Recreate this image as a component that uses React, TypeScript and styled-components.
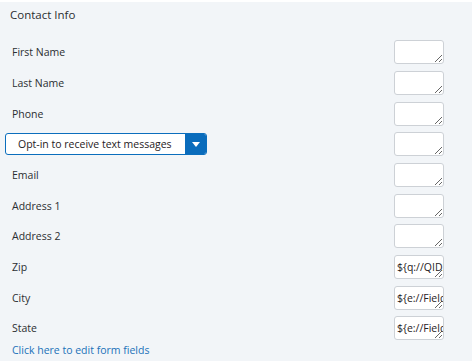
import styled, { createGlobalStyle } from 'styled-components';

const Global = createGlobalStyle`
    html, body {
        margin: 0;
        background: #ffffff;
    }
    body {
        font-family: "Open Sans", Lato, sans-serif;
        color: #2b2e31;
    }
`

const fields = [
    { label: 'First Name' },
    { label: 'Last Name' },
    { label: 'Phone' },
    { label: 'Opt-in to receive text messages', select: true },
    { label: 'Email' },
    { label: 'Address 1' },
    { label: 'Address 2' },
    { label: 'Zip', value: '${q://QID2/ChoiceTextEntryValue}' },
    { label: 'City', value: '${e://Field/City}' },
    { label: 'State', value: '${e://Field/State}' },
]

export default function App() {
    return (
        <>
            <Global />
            <Panel>
                <Heading>Contact Info</Heading>
                <Rows>
                    {fields.map((f) => (
                        <Row key={f.label}>
                            {f.select ? (
                                <Select>
                                    <SelectText>{f.label}</SelectText>
                                    <Caret>
                                        <svg width="8" height="5" viewBox="0 0 8 5">
                                            <path d="M0 0h8L4 5z" fill="#fff" />
                                        </svg>
                                    </Caret>
                                </Select>
                            ) : (
                                <Label>{f.label}</Label>
                            )}
                            <Field defaultValue={f.value ?? ''} spellCheck={false} />
                        </Row>
                    ))}
                </Rows>
                <EditLink href="#">Click here to edit form fields</EditLink>
            </Panel>
        </>
    )
}

const Panel = styled.div`
    margin: 2px 2px 0 0;
    min-height: calc(100vh - 2px);
    background: #f2f5f8;
    display: flex;
    flex-direction: column;
`

const Heading = styled.h2`
    margin: 0;
    padding: 5px 0 0 10px;
    height: 30px;
    font-size: 11.5px;
    line-height: 16px;
    font-weight: 400;
    color: #2b2e31;
`

const Rows = styled.div`
    display: flex;
    flex-direction: column;
`

const Row = styled.div`
    height: 30.67px;
    display: flex;
    align-items: center;
    justify-content: space-between;
    padding-right: 28px;
`

const Label = styled.span`
    padding-left: 12px;
    font-size: 10.5px;
    color: #2b2e31;
`

const Select = styled.div`
    margin-left: 5px;
    width: 202px;
    height: 22px;
    box-sizing: border-box;
    border: 1px solid #0b6ebd;
    border-radius: 3px;
    background: #fff;
    display: flex;
    align-items: stretch;
    overflow: hidden;
`

const SelectText = styled.span`
    flex: 1;
    padding-left: 12px;
    font-size: 10.5px;
    line-height: 20px;
    color: #1f2123;
`

const Caret = styled.span`
    width: 21px;
    background: #0a6cbc;
    display: flex;
    align-items: center;
    justify-content: center;
`

const Field = styled.textarea`
    width: 50px;
    height: 24px;
    box-sizing: border-box;
    margin: 0;
    padding: 3px 2px;
    border: 1px solid #cdd1d6;
    border-radius: 3px;
    background: #fff;
    font-family: "Open Sans", Lato, sans-serif;
    font-size: 10.5px;
    line-height: 16px;
    color: #1f2123;
    white-space: pre;
    overflow: hidden;
    resize: both;
    outline: none;
`

const EditLink = styled.a`
    margin-top: -1px;
    padding-left: 12px;
    font-size: 10.5px;
    line-height: 14px;
    color: #1a72b8;
    text-decoration: none;
`
